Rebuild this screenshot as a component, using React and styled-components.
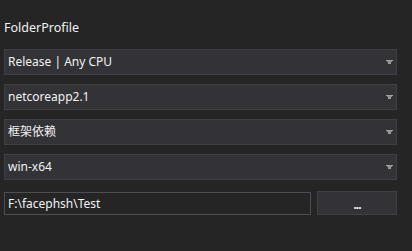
import React from "react";
import styled, { createGlobalStyle } from "styled-components";

const Global = createGlobalStyle`
  html, body { margin: 0; padding: 0; background: #252526; }
  body { font-family: "Noto Sans", "Noto Sans CJK SC", sans-serif; }
`;

const Page = styled.div`
  width: 412px;
  height: 251px;
  box-sizing: border-box;
  padding: 20px 15px 0 4px;
  display: flex;
  flex-direction: column;
  background: #252526;
  color: #f1f1f1;
  font-size: 12px;
`;

const Title = styled.div`
  height: 16px;
  line-height: 16px;
  margin-bottom: 13px;
  font-family: "Noto Sans", "Noto Sans CJK SC", sans-serif;
  font-size: 12.5px;
  color: #f1f1f1;
`;

const ComboList = styled.div`
  display: flex;
  flex-direction: column;
  gap: 9px;
`;

const Combo = styled.div`
  height: 26px;
  box-sizing: border-box;
  border: 1px solid #3f3f46;
  background: #333337;
  display: flex;
  align-items: center;
  justify-content: space-between;
  padding: 0 3px 0 3px;
`;

const ComboText = styled.span`
  font-family: "Noto Sans", "Noto Sans CJK SC", sans-serif;
  font-size: 12px;
  line-height: 16px;
  color: #f1f1f1;
  padding-bottom: 1px;
`;

const Arrow = styled.svg`
  width: 7px;
  height: 4px;
  display: block;
`;

const BottomRow = styled.div`
  margin-top: 11px;
  display: flex;
  align-items: flex-end;
  gap: 6px;
`;

const PathBox = styled.div`
  flex: 1;
  height: 23px;
  box-sizing: border-box;
  border: 1px solid #4e4e52;
  background: #252526;
  display: flex;
  align-items: center;
  padding: 0 3px;
  font-family: "Noto Sans", "Noto Sans CJK SC", sans-serif;
  font-size: 12px;
  color: #f1f1f1;
`;

const BrowseButton = styled.div`
  width: 80px;
  height: 24px;
  box-sizing: border-box;
  border: 1px solid #3f3f46;
  background: #333337;
  display: flex;
  align-items: center;
  justify-content: center;
  padding-top: 2px;
  font-family: "Noto Sans", sans-serif;
  font-size: 12px;
  font-weight: bold;
  letter-spacing: -1px;
  color: #f1f1f1;
`;

const DropArrow = () => (
  <Arrow viewBox="0 0 7 4">
    <rect x="0" y="0" width="7" height="1" fill="#a0a0a0" />
    <rect x="1" y="1" width="5" height="1" fill="#8a8a8a" />
    <rect x="2" y="2" width="3" height="2" fill="#9a9a9a" />
  </Arrow>
);

const items = ["Release | Any CPU", "netcoreapp2.1", "框架依赖", "win-x64"];

export default function App() {
  return (
    <>
      <Global />
      <Page>
        <Title>FolderProfile</Title>
        <ComboList>
          {items.map((t) => (
            <Combo key={t}>
              <ComboText>{t}</ComboText>
              <DropArrow />
            </Combo>
          ))}
        </ComboList>
        <BottomRow>
          <PathBox>F:\facephsh\Test</PathBox>
          <BrowseButton>...</BrowseButton>
        </BottomRow>
      </Page>
    </>
  );
}
